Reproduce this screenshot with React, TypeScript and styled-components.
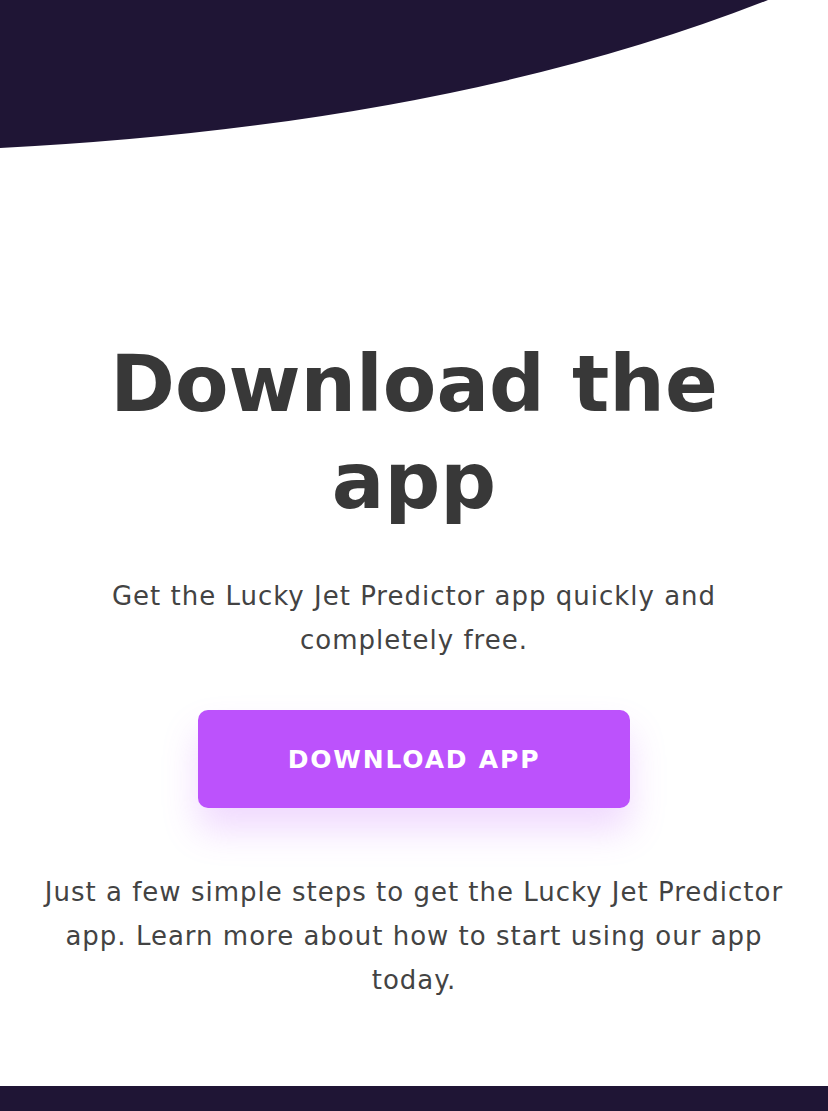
import styled, { createGlobalStyle } from "styled-components";

const GlobalStyle = createGlobalStyle`
    body {
        margin: 0;
        background: #ffffff;
        font-family: "DejaVu Sans", "Open Sans", sans-serif;
    }
`;

const Page = styled.div`
    width: 100%;
    min-height: 1111px;
    display: flex;
    flex-direction: column;
    overflow: hidden;
`;

const TopWave = styled.svg`
    display: block;
    width: 100%;
    height: 150px;
`;

const Section = styled.section`
    display: flex;
    flex-direction: column;
    align-items: center;
    text-align: center;
    padding: 186px 30px 0;
    height: 750px;
`;

const Heading = styled.h1`
    margin: 0;
    font-size: 78px;
    line-height: 97px;
    font-weight: 700;
    color: #383838;
    max-width: 640px;
`;

const Lead = styled.p<{ wide?: boolean }>`
    margin: ${({ wide }) => (wide ? "0" : "44px 0 0")};
    max-width: ${({ wide }) => (wide ? "760px" : "640px")};
    font-size: 26px;
    line-height: 44px;
    font-weight: 400;
    color: #434343;
    letter-spacing: 1px;
`;

const DownloadButton = styled.button`
    margin: 48px 0 62px;
    width: 432px;
    height: 98px;
    border: none;
    border-radius: 10px;
    background: #bc52fc;
    color: #ffffff;
    font-family: "DejaVu Sans", "Open Sans", sans-serif;
    font-size: 25px;
    font-weight: 700;
    letter-spacing: 1.8px;
    box-shadow: 0 22px 36px rgba(188, 82, 252, 0.22);
    cursor: pointer;
`;

const Footer = styled.footer`
    height: 25px;
    background: #1f1535;
    margin-top: auto;
`;

export default function App() {
    return (
        <Page>
            <GlobalStyle />
            <TopWave viewBox="0 0 828 150" preserveAspectRatio="none">
                <path d="M0 0 H768 Q450 125 0 148 Z" fill="#1f1535" />
            </TopWave>
            <Section>
                <Heading>Download the app</Heading>
                <Lead>Get the Lucky Jet Predictor app quickly and completely free.</Lead>
                <DownloadButton>DOWNLOAD APP</DownloadButton>
                <Lead wide>
                    Just a few simple steps to get the Lucky Jet Predictor app. Learn more about how to start using our app today.
                </Lead>
            </Section>
            <Footer />
        </Page>
    );
}
